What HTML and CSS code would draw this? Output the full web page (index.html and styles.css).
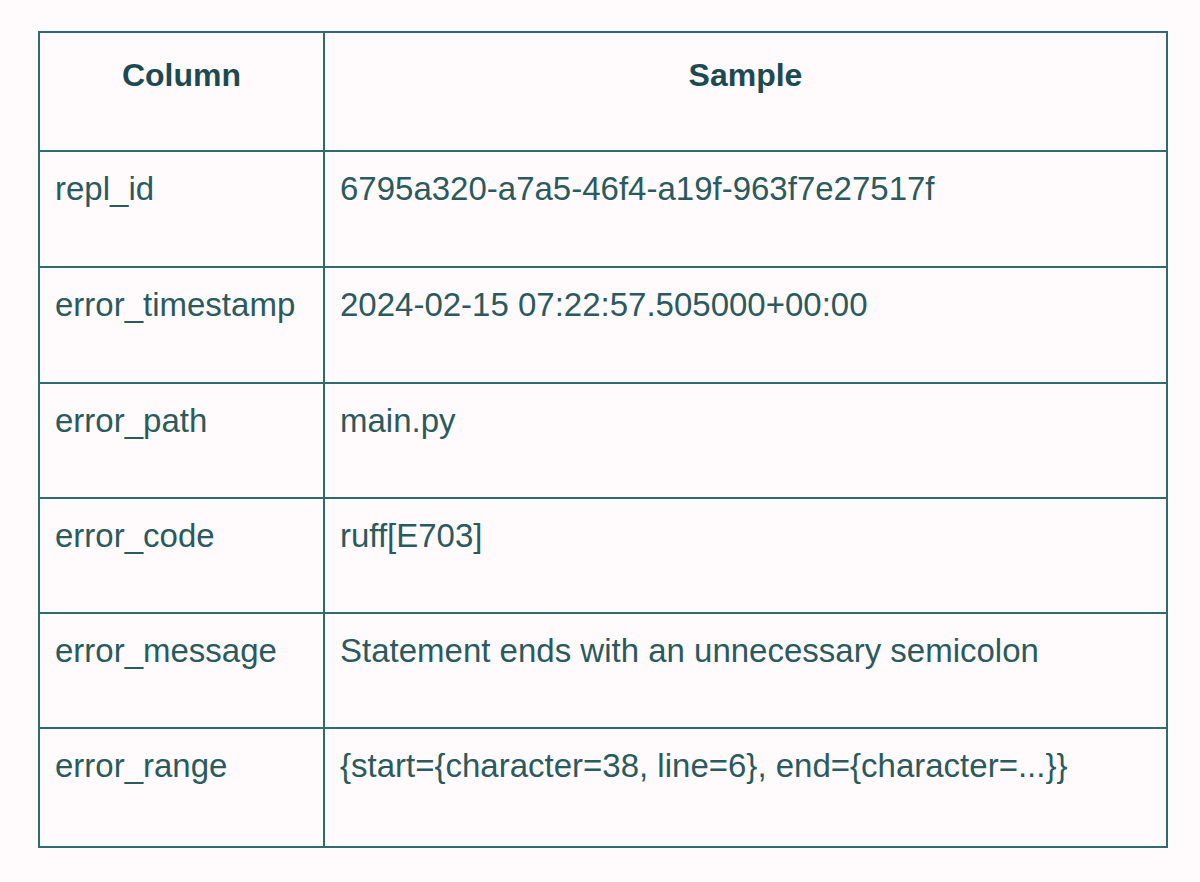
FILE: index.html
```html
<!DOCTYPE html>
<html lang="en">
<head>
<meta charset="utf-8">
<title>Error sample</title>
<link rel="stylesheet" href="styles.css">
</head>
<body>
<table class="sample-table">
  <colgroup>
    <col class="col-name">
    <col class="col-sample">
  </colgroup>
  <thead>
    <tr>
      <th>Column</th>
      <th>Sample</th>
    </tr>
  </thead>
  <tbody>
    <tr><td>repl_id</td><td>6795a320-a7a5-46f4-a19f-963f7e27517f</td></tr>
    <tr><td>error_timestamp</td><td>2024-02-15 07:22:57.505000+00:00</td></tr>
    <tr><td>error_path</td><td>main.py</td></tr>
    <tr><td>error_code</td><td>ruff[E703]</td></tr>
    <tr><td>error_message</td><td>Statement ends with an unnecessary semicolon</td></tr>
    <tr><td>error_range</td><td>{start={character=38, line=6}, end={character=...}}</td></tr>
  </tbody>
</table>
</body>
</html>
```
FILE: styles.css
```css
html, body {
  margin: 0;
  padding: 0;
  background: #fffbfc;
}

body {
  padding: 31px 0 0 38px;
  font-family: "Liberation Sans", Arial, sans-serif;
}

.sample-table {
  border-collapse: collapse;
  table-layout: fixed;
  width: 1128px;
  color: #2b5a5e;
}

.col-name { width: 285px; }
.col-sample { width: 843px; }

.sample-table th,
.sample-table td {
  border: 2px solid #2f6a6d;
  vertical-align: top;
  line-height: 40px;
  white-space: nowrap;
  overflow: hidden;
}

.sample-table th {
  font-size: 32px;
  font-weight: 700;
  color: #1d4a52;
  text-align: center;
  padding: 22px 15px 55px;
}

.sample-table td {
  font-size: 33px;
  font-weight: 400;
  text-align: left;
  padding: 17px 15px 57px;
}

.sample-table .num {
  letter-spacing: 0.5px;
}

.sample-table tbody tr:nth-child(3) td,
.sample-table tbody tr:nth-child(4) td,
.sample-table tbody tr:nth-child(5) td {
  padding-bottom: 56px;
}

.sample-table tbody tr:last-child td {
  padding-bottom: 60px;
}
```
